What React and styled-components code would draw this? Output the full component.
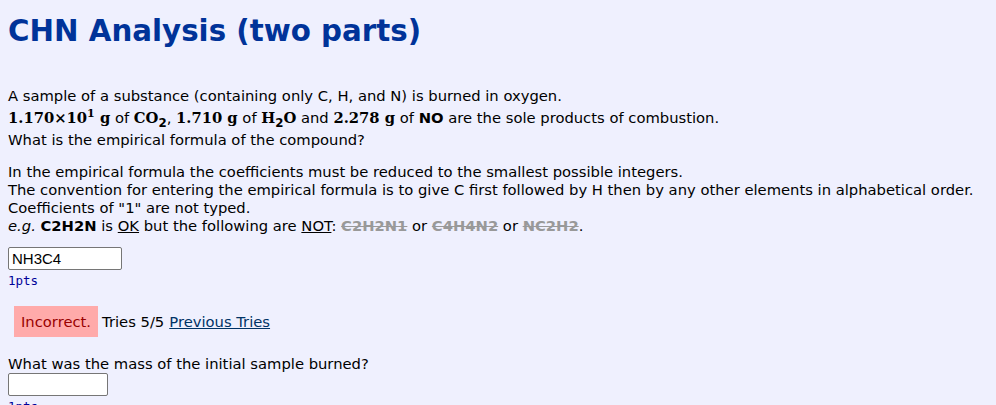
import React from 'react'
import styled, { createGlobalStyle } from 'styled-components'

const GlobalStyle = createGlobalStyle`
    body {
        margin: 0;
        padding: 0 8px;
        background-color: #eff0fe;
        color: #000000;
        font-family: "DejaVu Sans", Verdana, sans-serif;
        font-size: 14.75px;
    }
`

const Title = styled.h1`
    color: #003399;
    font-size: 29.3px;
    font-weight: bold;
    margin: 14px 0 37px 0;
`

const Para = styled.p`
    margin: 0 0 ${p => p.$gap || 0}px 0;
    line-height: ${p => p.$lh || 18}px;
`

// numbers with units are set in a bold serif
const Qty = styled.b`
    font-family: "DejaVu Serif", Georgia, serif;
    font-weight: bold;
`

const Formula = styled.b`
    font-family: "DejaVu Serif", Georgia, serif;
    font-weight: bold;
`

const Sup = styled.sup`
    font-size: 75%;
    line-height: 0;
`

const Sub = styled.sub`
    font-family: "DejaVu Sans", Verdana, sans-serif;
    font-size: 80%;
    line-height: 0;
`

const Struck = styled.b`
    color: #999999;
    text-decoration: line-through;
`

const AnswerBox = styled.input`
    display: block;
    box-sizing: border-box;
    width: ${p => p.$w}px;
    height: 23px;
    margin: 0;
    padding: 1px 3px;
    border: 1px solid #767676;
    border-radius: 2px;
    background: #ffffff;
    font-family: "Liberation Sans", Arial, sans-serif;
    font-size: 15px;
    color: #000000;
    outline: none;
`

const Points = styled.div`
    color: #000099;
    font-family: "DejaVu Sans Mono", monospace;
    font-size: 12.5px;
    line-height: 22px;
`

const Feedback = styled.div`
    display: flex;
    align-items: center;
    margin: 14px 0 18px 6px;
`

const Verdict = styled.span`
    background-color: #ffaaaa;
    color: #990000;
    padding: 7px 7px;
    margin-right: 4px;
`

const TryLink = styled.a`
    color: #003366;
    text-decoration: underline;
    margin-left: 5px;
`

const Question = styled.div`
    line-height: 18px;
`

export default function App() {
    return (
        <>
            <GlobalStyle />
            <Title>CHN Analysis (two parts)</Title>
            <Para $lh={22} $gap={12}>
                A sample of a substance (containing only C, H, and N) is burned in oxygen.<br />
                <Qty>1.170×10<Sup>1</Sup> g</Qty> of <Formula>CO<Sub>2</Sub></Formula>, <Qty>1.710 g</Qty> of <Formula>H<Sub>2</Sub>O</Formula> and <Qty>2.278 g</Qty> of <b>NO</b> are the sole products of combustion.<br />
                What is the empirical formula of the compound?
            </Para>
            <Para $gap={12}>
                In the empirical formula the coefficients must be reduced to the smallest possible integers.<br />
                The convention for entering the empirical formula is to give C first followed by H then by any other elements in alphabetical order.<br />
                Coefficients of "1" are not typed.<br />
                <i>e.g.</i> <b>C2H2N</b> is <u>OK</u> but the following are <u>NOT</u>: <Struck>C2H2N1</Struck> or <Struck>C4H4N2</Struck> or <Struck>NC2H2</Struck>.
            </Para>
            <AnswerBox $w={114} defaultValue="NH3C4" />
            <Points>1pts</Points>
            <Feedback>
                <Verdict>Incorrect.</Verdict>
                Tries 5/5
                <TryLink href="#">Previous Tries</TryLink>
            </Feedback>
            <Question>What was the mass of the initial sample burned?</Question>
            <AnswerBox $w={100} defaultValue="" />
            <Points>1pts</Points>
        </>
    )
}
